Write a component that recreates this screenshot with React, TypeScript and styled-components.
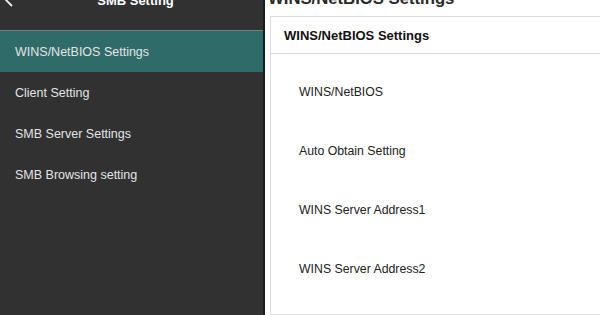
import React from "react";
import styled, { createGlobalStyle } from "styled-components";

const Global = createGlobalStyle`
  html, body { margin: 0; padding: 0; background: #ffffff; overflow: hidden; }
  body { font-family: "Liberation Sans", Arial, sans-serif; }
  #root { width: 600px; height: 315px; overflow: hidden; }
`;

const Shell = styled.div`
  display: flex;
  width: 600px;
  height: 329px;
  margin-top: -14px;
  overflow: hidden;
`;

const Sidebar = styled.aside`
  width: 263px;
  flex: none;
  background: #313131;
  border-right: 2px solid #1b1b1b;
  display: flex;
  flex-direction: column;
`;

const SideHeader = styled.div`
  height: 45px;
  box-sizing: border-box;
  padding: 5px 0 0 2px;
  display: flex;
  align-items: flex-start;
  border-bottom: 1px solid #7c7c7c;
`;

const BackButton = styled.span`
  width: 16px;
  height: 16px;
  display: flex;
  color: #f0f0f0;
`;

const SideTitle = styled.h1`
  flex: 1;
  margin: 2px 10px 0 0;
  text-align: center;
  font-size: 13px;
  line-height: 16px;
  font-weight: 700;
  color: #ffffff;
`;

const NavList = styled.nav`
  display: flex;
  flex-direction: column;
`;

const NavItem = styled.div<{ $active?: boolean }>`
  height: 41px;
  display: flex;
  align-items: center;
  padding-left: 15px;
  font-size: 12.5px;
  color: #e4e4e4;
  background: ${(p) => (p.$active ? "#2f6b69" : "transparent")};
`;

const Content = styled.main`
  flex: 1;
  min-width: 0;
  padding: 3px 0 0 3px;
  display: flex;
  flex-direction: column;
  background: #ffffff;
`;

const PageTitle = styled.h2`
  margin: 0 0 7px 0;
  font-size: 16.7px;
  line-height: 20px;
  font-weight: 700;
  color: #2a2a2a;
  white-space: nowrap;
`;

const Card = styled.section`
  margin-left: 2px;
  width: 360px;
  flex: 1;
  border: 1px solid #dcdcdc;
  border-right: none;
  display: flex;
  flex-direction: column;
`;

const CardHeader = styled.div`
  height: 36px;
  display: flex;
  align-items: center;
  padding-left: 13px;
  border-bottom: 1px solid #d6d6d6;
  font-size: 13px;
  font-weight: 700;
  color: #111111;
`;

const CardBody = styled.div`
  padding-top: 8px;
  display: flex;
  flex-direction: column;
`;

const Row = styled.div`
  height: 59px;
  display: flex;
  align-items: center;
  padding-left: 28px;
  font-size: 12.3px;
  color: #222222;
`;

const navItems = [
  "WINS/NetBIOS Settings",
  "Client Setting",
  "SMB Server Settings",
  "SMB Browsing setting",
];

const rows = [
  "WINS/NetBIOS",
  "Auto Obtain Setting",
  "WINS Server Address1",
  "WINS Server Address2",
];

export default function App() {
  return (
    <>
      <Global />
      <Shell>
        <Sidebar>
          <SideHeader>
            <BackButton>
              <svg width="16" height="16" viewBox="0 0 16 16" fill="none">
                <path d="M10 1 L3 8 L10 15" stroke="currentColor" strokeWidth="1.8" />
              </svg>
            </BackButton>
            <SideTitle>SMB Setting</SideTitle>
          </SideHeader>
          <NavList>
            {navItems.map((t, i) => (
              <NavItem key={t} $active={i === 0}>
                {t}
              </NavItem>
            ))}
          </NavList>
        </Sidebar>
        <Content>
          <PageTitle>WINS/NetBIOS Settings</PageTitle>
          <Card>
            <CardHeader>WINS/NetBIOS Settings</CardHeader>
            <CardBody>
              {rows.map((r) => (
                <Row key={r}>{r}</Row>
              ))}
            </CardBody>
          </Card>
        </Content>
      </Shell>
    </>
  );
}
